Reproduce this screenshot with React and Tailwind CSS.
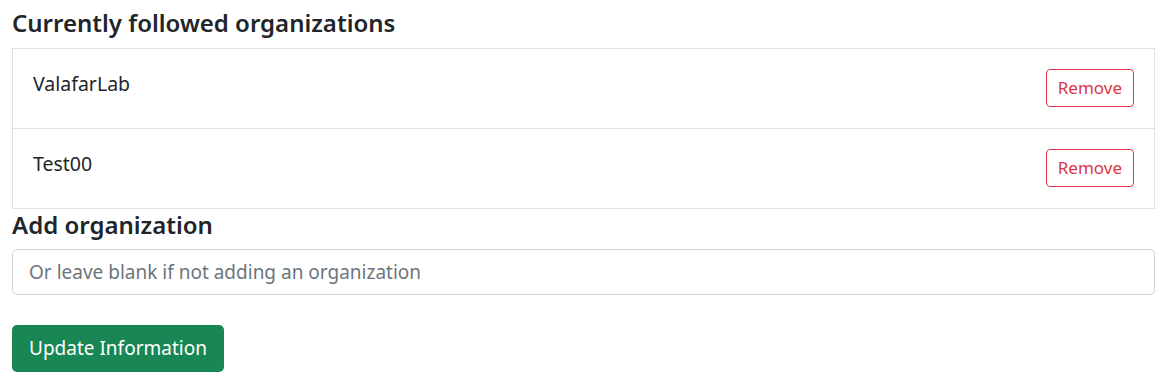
export default function App() {
  const orgs = ["ValafarLab", "Test00"];
  return (
    <div className="bg-white w-[1165px] h-[378px] pl-[12px] pr-[10px] text-[#212529]" style={{ fontFamily: '"Noto Sans", sans-serif' }}>
      <h4 className="text-[24px] font-semibold leading-[29px] pt-[8px] mb-[11px]">Currently followed organizations</h4>
      <ul className="border border-[#dee2e6]">
        {orgs.map((o, i) => (
          <li key={o} className={`flex justify-between items-start pl-[20px] pr-[20px] pt-[20px] h-[79px] ${i > 0 ? "border-t border-[#dee2e6] h-[80px]" : ""}`}>
            <span className="text-[19.5px] leading-[27px] mt-[1px]">{o}</span>
            <button className="h-[38px] px-[11px] text-[17px] text-[#dc3545] border border-[#dc3545] rounded-[4px] bg-white">Remove</button>
          </li>
        ))}
      </ul>
      <h4 className="text-[24px] font-semibold leading-[29px] mt-[1px] mb-[10px]">Add organization</h4>
      <input
        className="block w-full h-[46px] px-[16px] text-[19px] border border-[#ced4da] rounded-[5px] placeholder:text-[#6c757d] outline-none"
        placeholder="Or leave blank if not adding an organization"
      />
      <button className="mt-[30px] h-[47px] px-[17px] text-[19px] text-white bg-[#198754] rounded-[5px]">Update Information</button>
    </div>
  );
}
